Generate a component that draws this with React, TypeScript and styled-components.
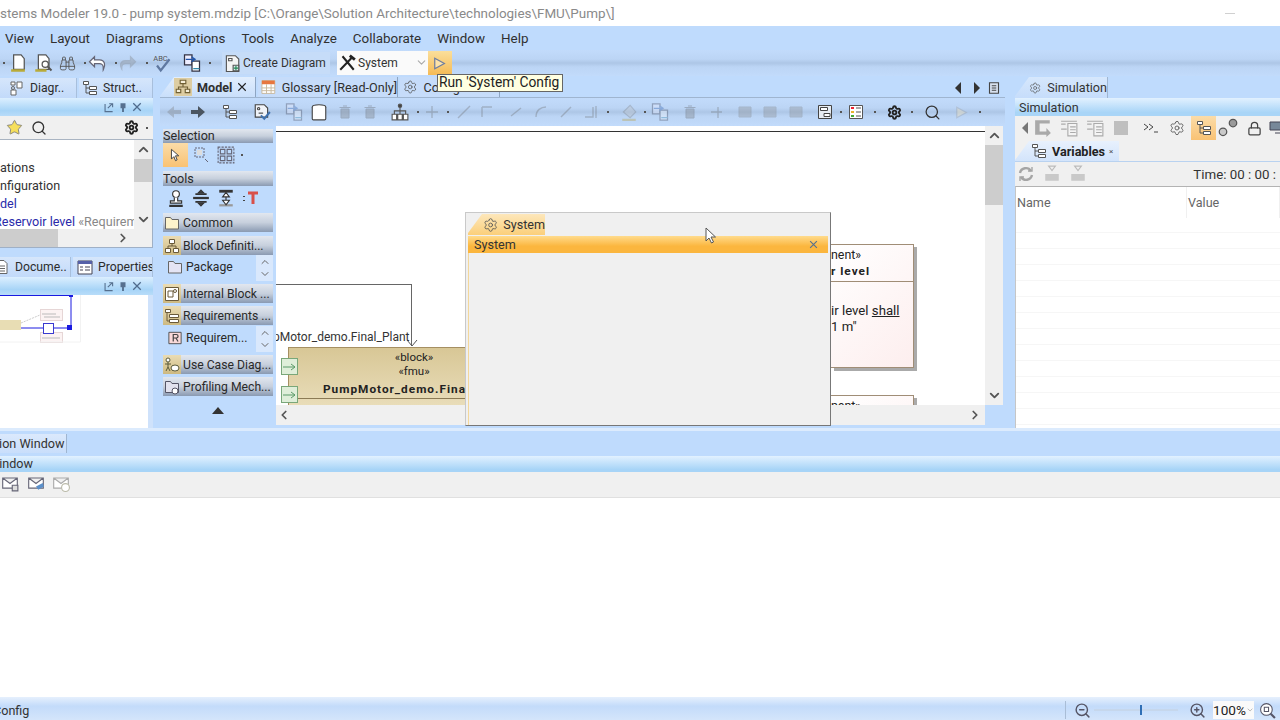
import React from 'react';
import styled, { createGlobalStyle } from 'styled-components';
import { Binoculars, ChevronDown, ChevronLeft, ChevronRight, ChevronUp, Lock, Search, Settings, Star, ZoomIn, ZoomOut } from 'lucide-react';

const Global = createGlobalStyle`
  html, body { margin: 0; padding: 0; background: #fff; overflow: hidden; }
  body { font-family: Roboto, "Noto Sans", sans-serif; font-size: 12.6px; color: #222; }
  #root { width: 1280px; height: 720px; }
`;
const BLUE = '#bfdbfd';
const BAND = 'linear-gradient(#c2dbfb 0%, #bcd5f5 35%, #adc6e6 50%, #bcd5f5 65%, #c2dbfb 100%)';
const SLANT = 'polygon(14px 0, 100% 0, 100% 100%, 0 100%, 0 19px)';
const Page = styled.div`position: relative; width: 1280px; height: 720px; overflow: hidden; display: flex; flex-direction: column; background: #fff;`;
const TitleBar = styled.div`height: 26px; flex: none; display: flex; align-items: center; justify-content: space-between; color: #8a8a8a; font-size: 13.45px; white-space: nowrap; background: #fff;`;
const MinBtn = styled.span`width: 10px; height: 1px; background: #d0d0d0; margin: 0 45px 0 0;`;
const MenuBar = styled.nav`height: 24px; flex: none; display: flex; align-items: center; gap: 16px; padding: 0 0 0 5px; background: ${BLUE}; font-size: 13.4px; color: #303030;`;
const MainBar = styled.div`height: 26px; flex: none; display: flex; align-items: center; background: ${BAND};`;
const Cell = styled.span<{ $ml?: number; $w?: number; $faded?: boolean }>`
  flex: none; display: flex; align-items: center; justify-content: center; width: ${p => p.$w ?? 20}px; height: 20px; margin-left: ${p => p.$ml ?? 0}px; opacity: ${p => (p.$faded ? 0.32 : 1)}; color: #444;
`;
const Dot = styled.span`width: 2px; height: 2px; background: #555; display: block;`;
const CreateBtn = styled.span`display: flex; align-items: center; gap: 2px; margin-left: 2px; color: #333; font-size: 12px; height: 22px; background: #c6dcf8; width: 108px; padding-left: 1px; box-sizing: border-box; white-space: nowrap;`;
const Combo = styled.span`display: flex; align-items: center; width: 91px; height: 24px; margin-left: 7px; background: #fafafa; color: #333; font-size: 12px; box-sizing: border-box; position: relative; gap: 2px; padding-left: 1px;`;
const ComboArrow = styled.span`position: absolute; right: 0; top: 5px; color: #aaa; display: flex;`;
const RunBtn = styled.span`width: 24px; height: 24px; background: linear-gradient(#fbdf9b, #f5bb55); display: flex; align-items: center; justify-content: center; box-sizing: border-box;`;
const Tooltip = styled.div`position: absolute; left: 437px; top: 74px; width: 126px; height: 18px; box-sizing: border-box; border: 1px solid #666; background: #ffffe1; color: #222; font-size: 13.8px; line-height: 15px; padding-left: 1px; white-space: nowrap; z-index: 5;`;
const Main = styled.main`position: relative; height: 352px; flex: none; display: flex; background: ${BLUE}; align-items: stretch;`;

const LeftCol = styled.section`width: 153px; flex: none; display: flex; flex-direction: column;`;
const TabStrip = styled.div<{ $h?: number }>`height: ${p => p.$h ?? 22}px; flex: none; display: flex; align-items: flex-end; gap: 2px;`;
const SideTab = styled.span<{ $w: number; $shift: number }>`
  width: ${p => p.$w}px; height: 20px; flex: none; display: flex; align-items: center; gap: 5px; font-size: 12.2px; background: linear-gradient(#d6e6fb, #c2dafa); border-right: 1px solid #a8bfdc; box-sizing: border-box; color: #2c2c2c; white-space: nowrap; overflow: hidden;
  & > svg:first-child { margin-left: ${p => p.$shift}px; flex: none; }
`;
const DockHead = styled.header`height: 18px; flex: none; display: flex; align-items: center; justify-content: flex-end; gap: 4px; padding-right: 11px; background: linear-gradient(#dcefff, #a7d4f7 70%, #b8dcf9); color: #5b6b88;`;
const SideTools = styled.div`height: 24px; flex: none; display: flex; align-items: center; background: #f0f0f0; border-bottom: 1px solid #a9b4c2; box-sizing: border-box;`;
const TreeBox = styled.div`height: 108px; flex: none; display: flex; flex-direction: column; background: #fff; border-right: 1px solid #9fb0c6; border-bottom: 1px solid #9fb0c6; box-sizing: border-box;`;
const TreeMain = styled.div`flex: 1; display: flex; min-height: 0;`;
const TreeRows = styled.ul`flex: 1; list-style: none; margin: 0; padding: 19px 0 0; overflow: hidden; min-width: 0;`;
const TreeRow = styled.li<{ $link?: boolean; $cut?: number }>`height: 18px; line-height: 18px; white-space: nowrap; color: ${p => (p.$link ? '#2a2aaa' : '#333')}; margin-left: ${p => p.$cut ?? 0}px;`;
const Stereo = styled.span`color: #888;`;
const VBar = styled.div`width: 18px; flex: none; display: flex; flex-direction: column; align-items: center; background: #f0f0f0; color: #555;`;
const ScrollBtn = styled.span`height: 19px; flex: none; display: flex; align-items: center; justify-content: center;`;
const VThumb = styled.div<{ $h: number }>`width: 100%; height: ${p => p.$h}px; background: #cdcdcd; flex: none;`;
const VSpace = styled.div`flex: 1;`;
const TreeH = styled.div`height: 18px; flex: none; display: flex; align-items: center; background: #f0f0f0; justify-content: space-between; padding-right: 22px; color: #555;`;
const HThumb = styled.div`width: 58px; height: 100%; background: #cdcdcd;`;
const Preview = styled.div`flex: 1; background: #fff; border-right: 5px solid #cfe2fb;`;

const CenterCol = styled.section`width: 845px; margin-left: 7px; flex: none; display: flex; flex-direction: column;`;
const DocTabs = styled.div`height: 22px; flex: none; display: flex; align-items: flex-end; gap: 2px; border-bottom: 1px solid #9fb5d0; box-sizing: border-box;`;
const DocTab = styled.span<{ $w: number; $on?: boolean }>`
  width: ${p => p.$w}px; height: 20px; flex: none; box-sizing: border-box; display: flex; align-items: center; gap: ${p => (p.$on ? 5 : 6)}px; padding-left: ${p => (p.$on ? 14 : 3)}px;
  background: ${p => (p.$on ? 'linear-gradient(#e2eefd,#c9dffb)' : '#c6dcfa')}; font-weight: ${p => (p.$on ? 700 : 400)}; border-right: 1px solid #8ea5c2; color: #2f2f2f; white-space: nowrap;
  ${p => (p.$on ? `clip-path: ${SLANT};` : '')}
`;
const TabNav = styled.div`margin-left: auto; display: flex; gap: 13px; align-items: center; padding: 0 5px 2px 0; color: #333;`;
const Arrow = styled.span<{ $dir: 'l' | 'r'; $c?: string }>`flex: none; width: 0; height: 0; border-top: 6px solid transparent; border-bottom: 6px solid transparent; ${p => (p.$dir === 'l' ? `border-right: 6px solid ${p.$c ?? '#333'};` : `border-left: 6px solid ${p.$c ?? '#333'};`)}`;
const NavList = styled.span`margin-left: -5px; display: flex;`;
const SimArrow = styled.span`margin-left: 7px; display: flex;`;
const CenterBar = styled.div`height: 28px; flex: none; display: flex; align-items: center; background: ${BAND}; box-sizing: border-box;`;
const Body = styled.div`flex: 1; display: flex; min-height: 0;`;
const Palette = styled.aside`width: 114px; flex: none; display: flex; flex-direction: column; align-items: stretch; padding: 3px 0 0 3px; box-sizing: border-box; background: ${BLUE}; font-size: 12.2px;`;
const PalHead = styled.div<{ $mt?: number; $h?: number }>`
  width: 110px; height: ${p => p.$h ?? 19}px; margin-top: ${p => p.$mt ?? 0}px; flex: none; box-sizing: border-box; display: flex; align-items: center; gap: 2px; color: #2a2a2a; white-space: nowrap; overflow: hidden; font-size: ${p => (p.$h ? '12.6px' : 'inherit')}; padding-bottom: ${p => (p.$h ? 1 : 0)}px;
  background: linear-gradient(#e2e7ef, #c7d0dd 50%, #8a9ab2);
`;
const PalTools = styled.div<{ $h: number }>`width: 110px; height: ${p => p.$h}px; flex: none; display: flex; align-items: center;`;
const PalItem = styled.div<{ $mt?: number; $h?: number }>`width: 110px; height: ${p => p.$h ?? 26}px; margin-top: ${p => p.$mt ?? 0}px; padding-bottom: 2px; flex: none; display: flex; align-items: center; gap: 3px; padding-left: 4px; box-sizing: border-box; color: #2a2a2a; position: relative;`;
const PalScroll = styled.span`position: absolute; right: 0; top: 0; bottom: 0; width: 17px; background: #d9e8fc; display: flex; flex-direction: column; align-items: center; justify-content: center; color: #666;`;
const IconTile = styled.span<{ $on?: boolean }>`width: 18px; height: 19px; flex: none; display: flex; align-items: center; justify-content: center; background: ${p => (p.$on ? 'linear-gradient(#eadcb4,#cdb981)' : 'transparent')};`;
const SelBtn = styled.span`width: 25px; height: 24px; flex: none; display: flex; align-items: center; justify-content: center; background: linear-gradient(#fbdca8,#f9c274);`;
const PalMore = styled.div`width: 110px; display: flex; justify-content: center; margin-top: 11px;`;
const UpTri = styled.span`width: 0; height: 0; border-left: 6px solid transparent; border-right: 6px solid transparent; border-bottom: 7px solid #333;`;
const CanvasWrap = styled.div`margin-left: 2px; width: 727px; flex: none; display: flex; flex-direction: column;`;
const CanvasRow = styled.div`height: 279px; flex: none; display: flex;`;
const Canvas = styled.div`position: relative; width: 709px; overflow: hidden; background: #fff; padding-top: 5px; box-sizing: border-box;`;
const TopRule = styled.div`height: 1px; background: #333;`;
const HBar = styled.div`height: 20px; flex: none; width: 709px; display: flex; align-items: center; justify-content: space-between; background: #f0f0f0; box-sizing: border-box; padding: 0 3px 0 1px; color: #555;`;
const Wire = styled.div`position: absolute; left: 0; top: 158px; width: 135px; height: 61px; border-top: 1.5px solid #666; border-right: 1.5px solid #666;`;
const WireTip = styled.svg`position: absolute; left: 130px; top: 213px;`;
const WireLabel = styled.span`position: absolute; left: -3px; top: 204px; font-size: 12px; color: #333; white-space: nowrap;`;
const Block = styled.div`position: absolute; left: 12px; top: 221px; width: 300px; height: 70px; background: linear-gradient(#d8c796, #ece1c0); border-top: 1px solid #a58f62; border-left: 1px solid #a58f62; text-align: center; color: #222; font-size: 11.5px; line-height: 14px; padding-top: 2px; box-sizing: border-box;`;
const BlockInner = styled.div`width: 250px; white-space: nowrap;`;
const BlockName = styled.div`font-weight: 700; font-size: 11.8px; letter-spacing: 1px; margin-top: 3px; line-height: 16px; border-bottom: 1px solid #8b7a55; padding-bottom: 1px; width: 300px; text-align: left; padding-left: 34px; box-sizing: border-box;`;
const Port = styled.span<{ $top: number }>`position: absolute; left: 5px; top: ${p => p.$top}px; width: 17px; height: 17px; box-sizing: border-box; background: #dfeed9; border: 1px solid #79a779; display: flex; align-items: center; justify-content: center;`;
const Req = styled.div<{ $top: number }>`position: absolute; left: 555px; top: ${p => p.$top}px; width: 83px; height: 124px; box-sizing: border-box; background: linear-gradient(135deg, #fff, #fdeeee); border: 1px solid #a08d76; border-left: 0; box-shadow: 3px 3px 0 #aaa; font-size: 12.4px; color: #222; line-height: 16px;`;
const ReqHead = styled.div`height: 37px; box-sizing: border-box; border-bottom: 1px solid #a08d76; padding-top: 2px; white-space: nowrap; line-height: 16px;`;
const ReqBold = styled.div`font-weight: 700; font-size: 11.8px; letter-spacing: 1px;`;
const ReqBody = styled.div`padding-top: 21px; white-space: nowrap; font-size: 13.2px;`;
const Underlined = styled.span`text-decoration: underline;`;
const Floating = styled.div`position: absolute; left: 465px; top: 136px; width: 366px; height: 214px; background: #f0f0f0; border: 1px solid #c9c9c9; border-bottom-color: #777; border-right-color: #777; box-sizing: border-box; display: flex; flex-direction: column; z-index: 2;`;
const FloatTab = styled.div`width: 77px; height: 21px; margin: 1px 0 0 2px; flex: none; box-sizing: border-box; display: flex; align-items: center; gap: 5px; padding-left: 15px; color: #333; background: linear-gradient(#fde7bb, #fbcf7a); clip-path: ${SLANT};`;
const FloatHead = styled.div`height: 17px; flex: none; margin: 1px 0 0 2px; width: 360px; display: flex; align-items: center; justify-content: space-between; box-sizing: border-box; padding: 0 10px 0 6px; color: #333; background: linear-gradient(#ffdb8c, #fbb63e 60%);`;
const FloatBody = styled.div`flex: 1; margin-left: 2px; border-left: 1px solid #f3d79a;`;
const CursorMark = styled.svg`position: absolute; left: 705px; top: 227px; z-index: 6;`;

const RightCol = styled.section`width: 265px; margin-left: 10px; flex: none; display: flex; flex-direction: column;`;
const SimTab = styled.div`width: 93px; height: 21px; margin-top: 1px; flex: none; display: flex; align-items: center; gap: 6px; padding-left: 14px; box-sizing: border-box; background: linear-gradient(#d6e7fc,#c6ddfb); border-right: 1px solid #9fb5d0; color: #333; clip-path: ${SLANT};`;
const SimHead = styled.div`height: 18px; flex: none; padding-left: 4px; display: flex; align-items: center; background: linear-gradient(#e2f1ff, #a9d5f7 80%); color: #333;`;
const SimTools = styled.div`height: 24px; flex: none; display: flex; align-items: center; background: #f0f0f0; overflow: hidden;`;
const HotBtn = styled.span<{ $ml: number }>`width: 25px; height: 24px; margin-left: ${p => p.$ml}px; flex: none; display: flex; align-items: center; justify-content: center; background: linear-gradient(#fbdca8,#f9c274);`;
const VarStrip = styled.div`height: 22px; flex: none; display: flex; align-items: flex-end; background: #f0f0f0; border-bottom: 1px solid #b9d2f0; box-sizing: border-box;`;
const VarTab = styled.span`width: 104px; height: 20px; box-sizing: border-box; display: flex; align-items: center; gap: 5px; padding-left: 16px; background: linear-gradient(#e8f1fd,#d3e4fb); font-weight: 700; color: #222; clip-path: ${SLANT};`;
const CloseDot = styled.span`font-size: 8px; font-weight: 400; color: #555; margin-left: -1px;`;
const VarTools = styled.div`height: 24px; flex: none; display: flex; align-items: center; background: #f0f0f0; justify-content: space-between; white-space: nowrap; color: #333; font-size: 13.3px; padding-right: 4px;`;
const VarIcons = styled.div`display: flex; align-items: center;`;
const GridBox = styled.div`flex: 1; background-color: #fff; border-top: 1px solid #b3b3b3; border-left: 1px solid #c6c6c6; background-image: repeating-linear-gradient(#fff 0 15px, #f6f6f6 15px 16px); background-position: 0 30px;`;
const GridHead = styled.div`height: 31px; display: grid; grid-template-columns: 171px 1fr; background: #fff; align-items: center; color: #666;`;
const GridCol = styled.span`padding-left: 1px; height: 100%; display: flex; align-items: center; border-right: 1px solid #f0f0f0;`;

const LowerTabs = styled.div`height: 28px; flex: none; background: ${BLUE}; display: flex; align-items: flex-end; border-top: 3px solid #dcebfd; box-sizing: border-box;`;
const LowerTab = styled.span`width: 67px; height: 19px; margin-bottom: 3px; box-sizing: border-box; background: linear-gradient(#dbe9fc, #c9defb); border-right: 1px solid #9fb5d0; color: #333; white-space: nowrap; line-height: 19px; text-indent: -5px; overflow: hidden;`;
const LowerHead = styled.div`height: 16px; flex: none; background: linear-gradient(#e2f1ff, #a7d4f7 85%); line-height: 15px; color: #333; text-indent: -12px; overflow: hidden;`;
const LowerTools = styled.div`height: 26px; flex: none; padding-bottom: 3px; box-sizing: border-box; background: #f0f0f0; display: flex; align-items: center; border-bottom: 1px solid #e0e0e0;`;
const Spacer = styled.div`flex: 1; background: #fff;`;
const Status = styled.footer`height: 23px; flex: none; display: flex; align-items: center; padding: 3px 2px 0 0; box-sizing: border-box; background: linear-gradient(#e6f0fd, #c3dbfa 40%, #d4e5fb); color: #333;`;
const StatusText = styled.span`flex: 1; text-indent: -7px; overflow: hidden;`;
const StatusSep = styled.span`width: 1px; height: 18px; background: #a9bdd6; margin-right: 8px;`;
const Slider = styled.span`width: 84px; height: 2px; margin-left: 3px; background: #c6d7ec; position: relative; display: block;`;
const Knob = styled.span`position: absolute; left: 46px; top: -4px; width: 2px; height: 10px; background: #2f6fb5;`;
const ZoomBox = styled.span`display: flex; align-items: center; width: 41px; height: 18px; margin-left: 6px; background: #fafafa; font-size: 13.6px; color: #222; overflow: hidden; white-space: nowrap;`;

type P = React.SVGProps<SVGSVGElement>;
const S = ({ children, ...r }: P) => <svg width={16} height={16} viewBox="0 0 16 16" fill="none" stroke="#555" strokeWidth={1} {...r}>{children}</svg>;
const PageYellow = () => <S width={20} height={20}><path d="M4.5 1.5h6l2.5 3V13H4.5z" fill="#fff" /><path d="M2.5 14h11" stroke="#b9ab38" strokeWidth={2} /></S>;
const PageFind = () => <S width={20} height={20}><path d="M3.5 1.5h6l2.5 3V13H3.5z" fill="#fff" /><circle cx="9" cy="9" r="2.5" /><path d="M11 11l3 3" strokeWidth={1.5} /><path d="M1 14h9" stroke="#b9ab38" strokeWidth={2} /></S>;
const Undo = () => <S width={20} height={20} stroke="#667" strokeWidth={1}><path d="M6 3L2 7l4 4V8.5h4a3 3 0 0 1 3 3v2c2-3.5 1.5-8-3-8H6z" fill="#fff" /></S>;
const Redo = () => <S width={20} height={20} stroke="#777" fill="#888"><path d="M10 3l4 4-4 4V8.5H6a3 3 0 0 0-3 3V13C1 10 2 6 6 6h4z" /></S>;
const Abc = () => <S width={20} height={20} stroke="#5f78a0"><path d="M4 10l3 4 7-9" strokeWidth={1.8} /><text x="1" y="6.5" fontSize="6" fill="#555" stroke="none">ABC</text></S>;
const Docs = () => <S width={20} height={20} stroke="#334"><path d="M2 1.5h6v8H2z" fill="#eef" /><path d="M8 6.5h6v8H8z" fill="#fff" /><path d="M3 5h7M7.5 3l3 2-3 2" stroke="#25a" /><path d="M9 12.5h5" stroke="#38a" /></S>;
const NewDiagram = () => <S width={18} height={18} stroke="#555"><path d="M3 1.5h8l3 3v11H3z" fill="#f4f4f4" /><path d="M5 4h3v2H5z" fill="#fff" /><path d="M9 10h5v5H9z" fill="#dfe8ef" /><path d="M11.5 10.5v4M9.5 12.5h4" stroke="#285" /></S>;
const Tools = () => <S width={18} height={18} stroke="#222" strokeWidth={1.8}><path d="M2 14L12 3.5M4 2l10 12" /><path d="M10.5 1.5l4.5 3.5" strokeWidth={2.5} /></S>;
const Play = ({ c = '#6d7da0' }: { c?: string }) => <S width={14} height={17} stroke={c} strokeWidth={1.4}><path d="M2 2l11 6-11 6z" fill="#fde3a9" /></S>;
const TabDiag = () => <S width={18} height={18} stroke="#6f5f34"><rect x="0" y="0" width="16" height="16" fill="#ddcda2" stroke="none" /><path d="M5.5 2h5v3h-5zM2 10h4v3H2zM10 10h4v3h-4z" fill="#f6efd9" /><path d="M8 5v3M4 10V8h8v2" /></S>;
const TabTable = () => <S width={18} height={18} stroke="#c7b79a"><path d="M1 1h14v14H1z" fill="#fff" /><path d="M1 1h14v4H1z" fill="#e7763f" stroke="none" /><path d="M1 9h14M1 12h14M6 5v10M11 5v10" /></S>;
const Tree = () => <S stroke="#555"><path d="M1.5 1.5h5v3h-5zM7.5 6.5h7v3h-7zM7.5 11.5h7v3h-7z" fill="#fff" /><path d="M4 4.5V13h3.5M4 8h3.5" /></S>;
const Props = () => <S stroke="#445"><path d="M1 2h14v13H1z" fill="#fff" /><path d="M1 2h14v3H1z" fill="#5661a8" stroke="none" /><path d="M3 8h3M8 8h5M3 11h3M8 11h5" /></S>;
const Doc = () => <S stroke="#666"><path d="M3 1.5h7l3 3v10H3z" fill="#fff" /><path d="M5 7h6M5 9.5h6M5 12h6" /></S>;
const ListDoc = () => <S width={12} height={14} stroke="#444"><path d="M2 1h12v14H2z" fill="#d8e2f0" strokeWidth={1.5} /><path d="M5 5h6M5 8h6M5 11h6" strokeWidth={1.5} /></S>;
const DiagTab = () => <S stroke="#666"><path d="M2 2h4v3H2zM8 2h5v6H8zM2 10h5v5H2z" fill="#fff" /><circle cx="4" cy="8" r="1.5" /></S>;
const Popout = () => <S width={11} height={11} stroke="#56708f"><path d="M3 3v11h11M7 9l6-6M9 2.5h5v5" strokeWidth={1.6} /></S>;
const Pin = () => <S width={10} height={11} stroke="none" fill="#56708f"><path d="M4 1h8v8H9.5v6h-3V9H4z" /></S>;
const Cross = ({ c = '#4f6a8c', s = 10, w = 2 }: { c?: string; s?: number; w?: number }) => <S width={s} height={s} stroke={c} strokeWidth={w}><path d="M2 2l12 12M14 2L2 14" /></S>;
const Arrowhead = () => <S width={13} height={14} stroke="#444" strokeWidth={1.2}><path d="M3 1v12l3-3 2 5 2-1-2-5h4z" fill="#fff" /></S>;
const DashOne = () => <S stroke="#667" strokeDasharray="2 1"><path d="M2 1h9v9H2z" /><path d="M4 3h5v5H4z" fill="#ddd" stroke="none" /><path d="M12 12l3 3" strokeDasharray="none" /></S>;
const DashFour = () => <S width={18} height={18} stroke="#667" strokeDasharray="2 1"><path d="M1 1h14v14H1z" /><path d="M3 3h4v4H3zM9 3h4v4H9zM3 9h4v4H3zM9 9h4v4H9z" strokeDasharray="none" /></S>;
const Stamp = () => <S width={18} height={18} stroke="#333"><circle cx="8" cy="4.5" r="3" fill="#fff" /><path d="M6.5 7.5v3H3v2h10v-2H9.5v-3" fill="#fff" /><path d="M2 15h12" strokeWidth={2} stroke="#333" /></S>;
const Level = () => <S width={18} height={18} stroke="#333"><path d="M1 8h14" strokeWidth={2} /><path d="M3 4.5h10M3 11.5h10" strokeWidth={1.5} /><path d="M8 1l2.5 2.5h-5zM8 15l2.5-2.5h-5z" fill="#444" /></S>;
const Pillar = () => <S width={18} height={18} stroke="#333"><path d="M2 2h12" strokeWidth={2.5} /><path d="M2 14.5h12" strokeWidth={2} stroke="#999" /><path d="M8 3l-3 4h6zM8 14l-3-4h6zM8 7v3" fill="#fff" /></S>;
const RedT = () => <S stroke="#d8504a" strokeWidth={3}><path d="M5 3h10M10 3v11" /><path d="M1 6v1M1 10v1" stroke="#444" strokeWidth={2} /></S>;
const Folder = ({ fill = '#fdf3cc' }: { fill?: string }) => <S stroke="#666"><path d="M1.5 14V2.5h5l1.5 2h6.5V14z" fill={fill} /></S>;
const ReqIcon = () => <S stroke="#444" width={16} height={14}><path d="M1 1.5h14v13H1z" fill="#f9d9d9" /><path d="M6 12V4h3.5a2 2 0 0 1 0 4H6M9 8l2.5 4" strokeWidth={1.4} /></S>;
const InternalIcon = () => <S stroke="#6a5a3a"><path d="M1.5 1.5h13v13h-13z" fill="#fff" /><path d="M4 5h5v6H4z" /><circle cx="11" cy="5" r="1.5" /></S>;
const ReqDiagIcon = () => <S stroke="#6a5a3a"><path d="M1.5 1.5h5v3h-5zM5.5 6.5h9v3h-9zM5.5 11.5h9v3h-9z" fill="#fff" /><path d="M3 4.5V13h2.5" /></S>;
const BlockDiagIcon = () => <S stroke="#6a5a3a"><path d="M5.5 1.5h5v4h-5zM1.5 10.5h5v4h-5zM9.5 10.5h5v4h-5z" fill="#fff" /><path d="M8 5.5V8M4 10.5V8h8v2.5" /></S>;
const CheckDoc = () => <S width={18} height={18} stroke="#444"><path d="M2 1.5h8l3 3v8H2z" fill="#f0f3f8" /><circle cx="5" cy="5" r="1" /><path d="M5 9h4" /><path d="M7 11l3 3 5-6" stroke="#3f72b0" strokeWidth={1.8} /></S>;
const UseCase = () => <S stroke="#5a5a3a"><circle cx="4" cy="3" r="2" fill="#fff" /><path d="M4 5v5M1 7h6M4 10l-2 4M4 10l2 4" /><ellipse cx="11" cy="11" rx="4" ry="3" fill="#fff" /></S>;
const Profiling = () => <S stroke="#556"><path d="M1.5 13.5V2.5h5l1.5 2h6.5v9z" fill="#e2e2ee" /><circle cx="11" cy="12" r="3" fill="#fff" /></S>;
const PortArrow = () => <svg width="13" height="8" viewBox="0 0 13 8" fill="none" stroke="#5b9a68"><path d="M0 4h12M8 1l4 3-4 3" /></svg>;
const Mail = ({ k }: { k: 0 | 1 | 2 }) => <S width={18} height={18} stroke={k === 2 ? '#aaa' : '#667'}><path d="M1.5 3.5h13v9h-13zM1.5 3.5l6.5 5 6.5-5" fill="#fff" />{k === 0 && <path d="M10 10h5v5h-5z" fill="#ddd" />}{k === 1 && <path d="M8 11l6-3 1 3-5 3z" fill="#5b8fc9" stroke="none" />}{k === 2 && <circle cx="12" cy="12" r="3.5" fill="#fff" stroke="#bba" />}</S>;
const Trash = () => <S stroke="#555" fill="#777"><path d="M4 5h8v9H4z" /><path d="M2.5 3.5h11M6 2h4" /></S>;
const FadedBox = () => <S stroke="#777" fill="#888"><path d="M2 3h12v10H2z" /></S>;
const FadedLine = ({ d }: { d: string }) => <S stroke="#666" strokeWidth={1.4}><path d={d} /></S>;
const Cyl = () => <S width={18} height={18} stroke="#444"><ellipse cx="8" cy="3.5" rx="6" ry="2" fill="#fff" /><path d="M2 3.5V14a1 1 0 0 0 1 1h10a1 1 0 0 0 1-1V3.5" fill="#fff" /></S>;
const ArrowBig = ({ left }: { left?: boolean }) => <S stroke="none" fill={left ? '#777' : '#4b5560'} transform={left ? 'scale(-1,1)' : undefined}><path d="M8 2l7 6-7 6v-4H1V6h7z" /></S>;
const Hier = () => <S width={18} height={18} stroke="#555"><circle cx="8" cy="2.5" r="1.5" fill="#444" /><path d="M8 4v3M3 10V7h10v3M8 7v3" /><path d="M1 10h4v5H1zM6 10h4v5H6zM11 10h4v5h-4z" fill="#fff" /></S>;
const Fill = () => <S width={20} height={18} stroke="#777"><path d="M3 8l6-6 5 6-5 5z" fill="#bbb" /><path d="M2 15h12" stroke="#b79a32" strokeWidth={2} /></S>;
const Colors = () => <S stroke="#555"><path d="M1.5 1.5h13v13h-13z" fill="#fff" /><path d="M3 4h3" stroke="#e23" strokeWidth={2} /><path d="M3 8h3" stroke="#e9b52e" strokeWidth={2} /><path d="M3 12h3" stroke="#4a3" strokeWidth={2} /><path d="M8 4h5M8 8h5M8 12h5" /></S>;
const Shapes = () => <S stroke="#444"><path d="M1.5 1.5h13v13h-13z" fill="#e7ecf2" /><path d="M3.5 3.5h7v3h-7zM7 9.5h6v3H7z" fill="#fff" /></S>;
const Balls = () => <S width={20} height={20}><circle cx="4" cy="11" r="3" fill="#c9c9c9" /><circle cx="12" cy="4" r="3" fill="#9a9a9a" /></S>;
const Monitor = () => <S stroke="#445"><path d="M1 2h11v8H1z" fill="#789" /><path d="M6 13h5" /></S>;
const Terminal = () => <S stroke="#444"><path d="M1 4l4 3-4 3M6 4l4 3-4 3M11 12h4" /></S>;
const Refresh = () => <S stroke="#a5a5a5" strokeWidth={2.4}><path d="M2 7a6 6 0 0 1 11-2M14 9a6 6 0 0 1-11 2" /><path d="M14 1v4h-4M2 15v-4h4" strokeWidth={1.4} /></S>;
const Stop = () => <S stroke="none" fill="#bfbfbf"><path d="M1 1h14v14H1z" /></S>;
const SimStep = () => <S width={18} height={18} stroke="none" fill="#a9a9a9"><path d="M1 1h13v3H5v7h6V8l4 4.5-4 3.5v-2H1z" /></S>;
const ListArrow = () => <S width={18} height={18} stroke="#aaa"><path d="M1 2h14M1 4.5h4M7 4h8v11H7z" fill="#f4f4f4" /><path d="M9 7h5M9 9.5h5M9 12h5M1 9h5" /></S>;
const Down = () => <S width={18} height={18} stroke="#bbb"><path d="M5 1l3 4 3-4z" /><path d="M2 8h12v6H2z" fill="#c9c9c9" stroke="none" /></S>;
const ActualSize = () => <S width={17} height={17} stroke="#556"><circle cx="7" cy="7" r="5.5" fill="#fff" /><path d="M5 5h4v4H5z" /><path d="M11 11l4 4" strokeWidth={2} /></S>;
const Thumb = styled.svg`display: block;`;

const d = <Dot />;
const centerIcons: [number, React.ReactNode, boolean?][] = [
  [174, <ArrowBig left />, true], [198, <ArrowBig />], [230, <Tree />], [262, <CheckDoc />], [294, <Docs />, true], [319, <Cyl />],
  [345, <Trash />, true], [370, <Trash />, true], [400, <Hier />], [418, d], [432, <FadedLine d="M8 2v12M2 8h12" />, true], [448, d], [464, <FadedLine d="M2 14L14 2" />, true],
  [487, <FadedLine d="M3 3v10M3 3h10" />, true], [516, <FadedLine d="M3 12L13 4" />, true], [541, <FadedLine d="M3 13C3 6 8 3 13 3" />, true], [566, <FadedLine d="M3 13l10-10" />, true], [591, <FadedLine d="M2 13h8V3M13 2v12" />, true], [608, d],
  [629, <Fill />, true], [645, d], [660, <Docs />, true], [690, <Trash />, true], [718, <FadedLine d="M1 8h11M8 3v11" />, true], [745, <FadedBox />, true], [770, <FadedBox />, true], [796, <FadedBox />, true],
  [825, <Shapes />], [841, d], [856, <Colors />], [875, d], [894, <Settings size={15} color="#222" strokeWidth={3} />], [912, d], [932, <Search size={17} color="#333" strokeWidth={1.8} />], [962, <Play c="#999" />, true], [980, d],
];
const mainIcons: [number, React.ReactNode, boolean?][] = [
  [4, d], [18, <PageYellow />], [44, <PageFind />], [67, <Binoculars size={17} color="#555" strokeWidth={1.3} />], [85, d], [97, <Undo />], [116, d], [128, <Redo />, true], [147, d], [162, <Abc />], [192, <Docs />], [210, d],
];
const simIcons: [number, React.ReactNode, boolean?][] = [
  [1043, <SimStep />], [1069, <ListArrow />], [1095, <ListArrow />], [1121, <Stop />], [1151, <Terminal />], [1177, <Settings size={16} color="#555" strokeWidth={1.3} />],
];
const rowOf = (items: [number, React.ReactNode, boolean?][], origin: number) => {
  let prev = origin;
  return items.map(([x, node, faded], i) => {
    const ml = x - 10 - prev;
    prev = x + 10;
    return <Cell key={i} $ml={ml} $faded={faded}>{node}</Cell>;
  });
};
const pairScroll = <PalScroll><ChevronUp size={12} /><ChevronDown size={12} /></PalScroll>;

export default function App() {
  return (
    <Page>
      <Global />
      <TitleBar>
        <span>stems Modeler 19.0 - pump system.mdzip [C:\Orange\Solution Architecture\technologies\FMU\Pump\]</span>
        <MinBtn />
      </TitleBar>
      <MenuBar>
        {['View', 'Layout', 'Diagrams', 'Options', 'Tools', 'Analyze', 'Collaborate', 'Window', 'Help'].map(m => <span key={m}>{m}</span>)}
      </MenuBar>
      <MainBar>
        {rowOf(mainIcons, 0)}
        <CreateBtn><NewDiagram />Create Diagram</CreateBtn>
        <Combo><Tools />System<ComboArrow><ChevronDown size={13} /></ComboArrow></Combo>
        <RunBtn><Play /></RunBtn>
      </MainBar>
      <Main>
        <LeftCol>
          <TabStrip>
            <SideTab $w={77} $shift={9}><DiagTab />Diagr..</SideTab>
            <SideTab $w={74} $shift={3}><Tree />Struct..</SideTab>
          </TabStrip>
          <DockHead><Popout /><Pin /><Cross /></DockHead>
          <SideTools>
            <Cell $ml={4}><Star size={17} fill="#f6df5c" color="#777" strokeWidth={1.2} /></Cell>
            <Cell $ml={5}><Search size={16} color="#333" /></Cell>
            <Cell $ml={72}><Settings size={15} color="#222" strokeWidth={3} /></Cell>
            <Cell $w={8} $ml={2}>{d}</Cell>
          </SideTools>
          <TreeBox>
            <TreeMain>
              <TreeRows>
                <TreeRow>ations</TreeRow>
                <TreeRow>nfiguration</TreeRow>
                <TreeRow $link>del</TreeRow>
                <TreeRow $link $cut={-6}>Reservoir level <Stereo>«Requirem</Stereo></TreeRow>
              </TreeRows>
              <VBar>
                <ScrollBtn><ChevronUp size={15} strokeWidth={3} /></ScrollBtn>
                <VThumb $h={23} />
                <VSpace />
                <ScrollBtn><ChevronDown size={15} strokeWidth={3} /></ScrollBtn>
              </VBar>
            </TreeMain>
            <TreeH><HThumb /><ChevronRight size={14} strokeWidth={3} /></TreeH>
          </TreeBox>
          <TabStrip $h={29}>
            <SideTab $w={71} $shift={-6}><Doc />Docume..</SideTab>
            <SideTab $w={80} $shift={4}><Props />Properties</SideTab>
          </TabStrip>
          <DockHead><Popout /><Pin /><Cross /></DockHead>
          <Preview>
            <Thumb width="82" height="60" viewBox="0 0 82 60" fill="none">
              <path d="M0 .5h71V33H0" stroke="#1a1ae0" />
              <rect x="69" y="0" width="4" height="2" fill="#1a1ae0" />
              <rect x="67" y="30" width="5" height="5" fill="#1a1ae0" />
              <rect x="0" y="25" width="21" height="10" fill="#e8ddb4" />
              <path d="M21 28L40 20" stroke="#ccc" strokeDasharray="2 1" />
              <rect x="40.5" y="14.5" width="22" height="11" fill="#fcf3f3" stroke="#e6d6d6" />
              <path d="M42 19h14M44 22h16" stroke="#bbb" />
              <rect x="40.5" y="37.5" width="22" height="10" fill="#fcf3f3" stroke="#e6d6d6" />
              <path d="M42 43h18" stroke="#bbb" />
              <rect x="43.5" y="28.5" width="10" height="10" fill="#fff" stroke="#3a3ad0" />
              <path d="M80.5 0v47H0" stroke="#f2f2f2" />
            </Thumb>
          </Preview>
        </LeftCol>
        <CenterCol>
          <DocTabs>
            <DocTab $w={96} $on><TabDiag />Model<Cross c="#222" s={10} w={1.8} /></DocTab>
            <DocTab $w={140}><TabTable />Glossary [Read-Only]</DocTab>
            <DocTab $w={100}><Settings size={16} color="#555" strokeWidth={1.3} />Configuration</DocTab>
            <TabNav><Arrow $dir="l" /><Arrow $dir="r" /><NavList><ListDoc /></NavList></TabNav>
          </DocTabs>
          <CenterBar>{rowOf(centerIcons, 160)}</CenterBar>
          <Body>
            <Palette>
              <PalHead $h={14}>Selection</PalHead>
              <PalTools $h={24}><SelBtn><Arrowhead /></SelBtn><Cell $w={25}><DashOne /></Cell><Cell $w={25}><DashFour /></Cell><Cell $w={8}>{d}</Cell></PalTools>
              <PalHead $h={15} $mt={4}>Tools</PalHead>
              <PalTools $h={24}><Cell $w={25}><Stamp /></Cell><Cell $w={25}><Level /></Cell><Cell $w={25}><Pillar /></Cell><Cell $w={25}><RedT /></Cell></PalTools>
              <PalHead $mt={3}><IconTile><Folder /></IconTile>Common</PalHead>
              <PalHead $mt={4}><IconTile $on><BlockDiagIcon /></IconTile>Block Definiti...</PalHead>
              <PalItem><Folder fill="#e4e4f4" />Package{pairScroll}</PalItem>
              <PalHead $mt={3}><IconTile $on><InternalIcon /></IconTile>Internal Block ...</PalHead>
              <PalHead $mt={3}><IconTile $on><ReqDiagIcon /></IconTile>Requirements ...</PalHead>
              <PalItem $mt={1}><ReqIcon />Requirem...{pairScroll}</PalItem>
              <PalHead $mt={3}><IconTile $on><UseCase /></IconTile>Use Case Diag...</PalHead>
              <PalHead $mt={3}><IconTile><Profiling /></IconTile>Profiling Mech...</PalHead>
              <PalMore><UpTri /></PalMore>
            </Palette>
            <CanvasWrap>
              <CanvasRow>
                <Canvas>
                  <TopRule />
                  <Wire />
                  <WireTip width="12" height="8" viewBox="0 0 12 8" fill="none" stroke="#555"><path d="M1 1l5 6 5-6" /></WireTip>
                  <WireLabel>pMotor_demo.Final_Plant</WireLabel>
                  <Block>
                    <BlockInner>«block»<br />«fmu»</BlockInner>
                    <BlockName>PumpMotor_demo.Final_Plant</BlockName>
                  </Block>
                  <Port $top={232}><PortArrow /></Port>
                  <Port $top={260}><PortArrow /></Port>
                  <Req $top={118}>
                    <ReqHead>nent»<ReqBold>r level</ReqBold></ReqHead>
                    <ReqBody>ir level <Underlined>shall</Underlined><br />1 m"</ReqBody>
                  </Req>
                  <Req $top={269}><ReqHead>nent»</ReqHead></Req>
                </Canvas>
                <VBar>
                  <ScrollBtn><ChevronUp size={15} strokeWidth={3} /></ScrollBtn>
                  <VThumb $h={60} />
                  <VSpace />
                  <ScrollBtn><ChevronDown size={15} strokeWidth={3} /></ScrollBtn>
                </VBar>
              </CanvasRow>
              <HBar><ChevronLeft size={14} strokeWidth={3} /><ChevronRight size={14} strokeWidth={3} /></HBar>
            </CanvasWrap>
          </Body>
        </CenterCol>
        <RightCol>
          <SimTab><Settings size={16} color="#555" strokeWidth={1.3} />Simulation</SimTab>
          <SimHead>Simulation</SimHead>
          <SimTools>
            <SimArrow><Arrow $dir="l" $c="#777" /></SimArrow>
            {rowOf(simIcons, 1028)}
            <HotBtn $ml={4}><Tree /></HotBtn>
            <Cell $ml={2}><Balls /></Cell>
            <Cell $ml={6}><Lock size={15} color="#444" /></Cell>
            <Cell $ml={3}><Monitor /></Cell>
          </SimTools>
          <VarStrip><VarTab><Tree />Variables<CloseDot>×</CloseDot></VarTab></VarStrip>
          <VarTools>
            <VarIcons><Cell $ml={1}><Refresh /></Cell><Cell $ml={6}><Down /></Cell><Cell $ml={6}><Down /></Cell></VarIcons>
            <span>Time: 00 : 00 :</span>
          </VarTools>
          <GridBox>
            <GridHead><GridCol>Name</GridCol><GridCol>Value</GridCol></GridHead>
          </GridBox>
        </RightCol>
        <Floating>
          <FloatTab><Settings size={16} color="#555" strokeWidth={1.3} />System</FloatTab>
          <FloatHead>System<Cross c="#56708f" s={9} /></FloatHead>
          <FloatBody />
        </Floating>
      </Main>
      <LowerTabs><LowerTab>tion Window</LowerTab></LowerTabs>
      <LowerHead>Window</LowerHead>
      <LowerTools>
        <Cell $w={18} $ml={1}><Mail k={0} /></Cell>
        <Cell $w={18} $ml={8}><Mail k={1} /></Cell>
        <Cell $w={18} $ml={7}><Mail k={2} /></Cell>
      </LowerTools>
      <Spacer />
      <Status>
        <StatusText>Config</StatusText>
        <StatusSep />
        <ZoomOut size={17} color="#556" />
        <Slider><Knob /></Slider>
        <Cell $ml={9}><ZoomIn size={17} color="#556" /></Cell>
        <ZoomBox>100%<ChevronDown size={10} color="#999" /></ZoomBox>
        <Cell $w={22} $ml={2}><ActualSize /></Cell>
      </Status>
      <Tooltip>Run 'System' Config</Tooltip>
      <CursorMark width="14" height="18" viewBox="0 0 14 18"><path d="M1 1v13l3-3 2.5 5 2-1L6 10h4.5z" fill="#fff" stroke="#555" /></CursorMark>
    </Page>
  );
}
